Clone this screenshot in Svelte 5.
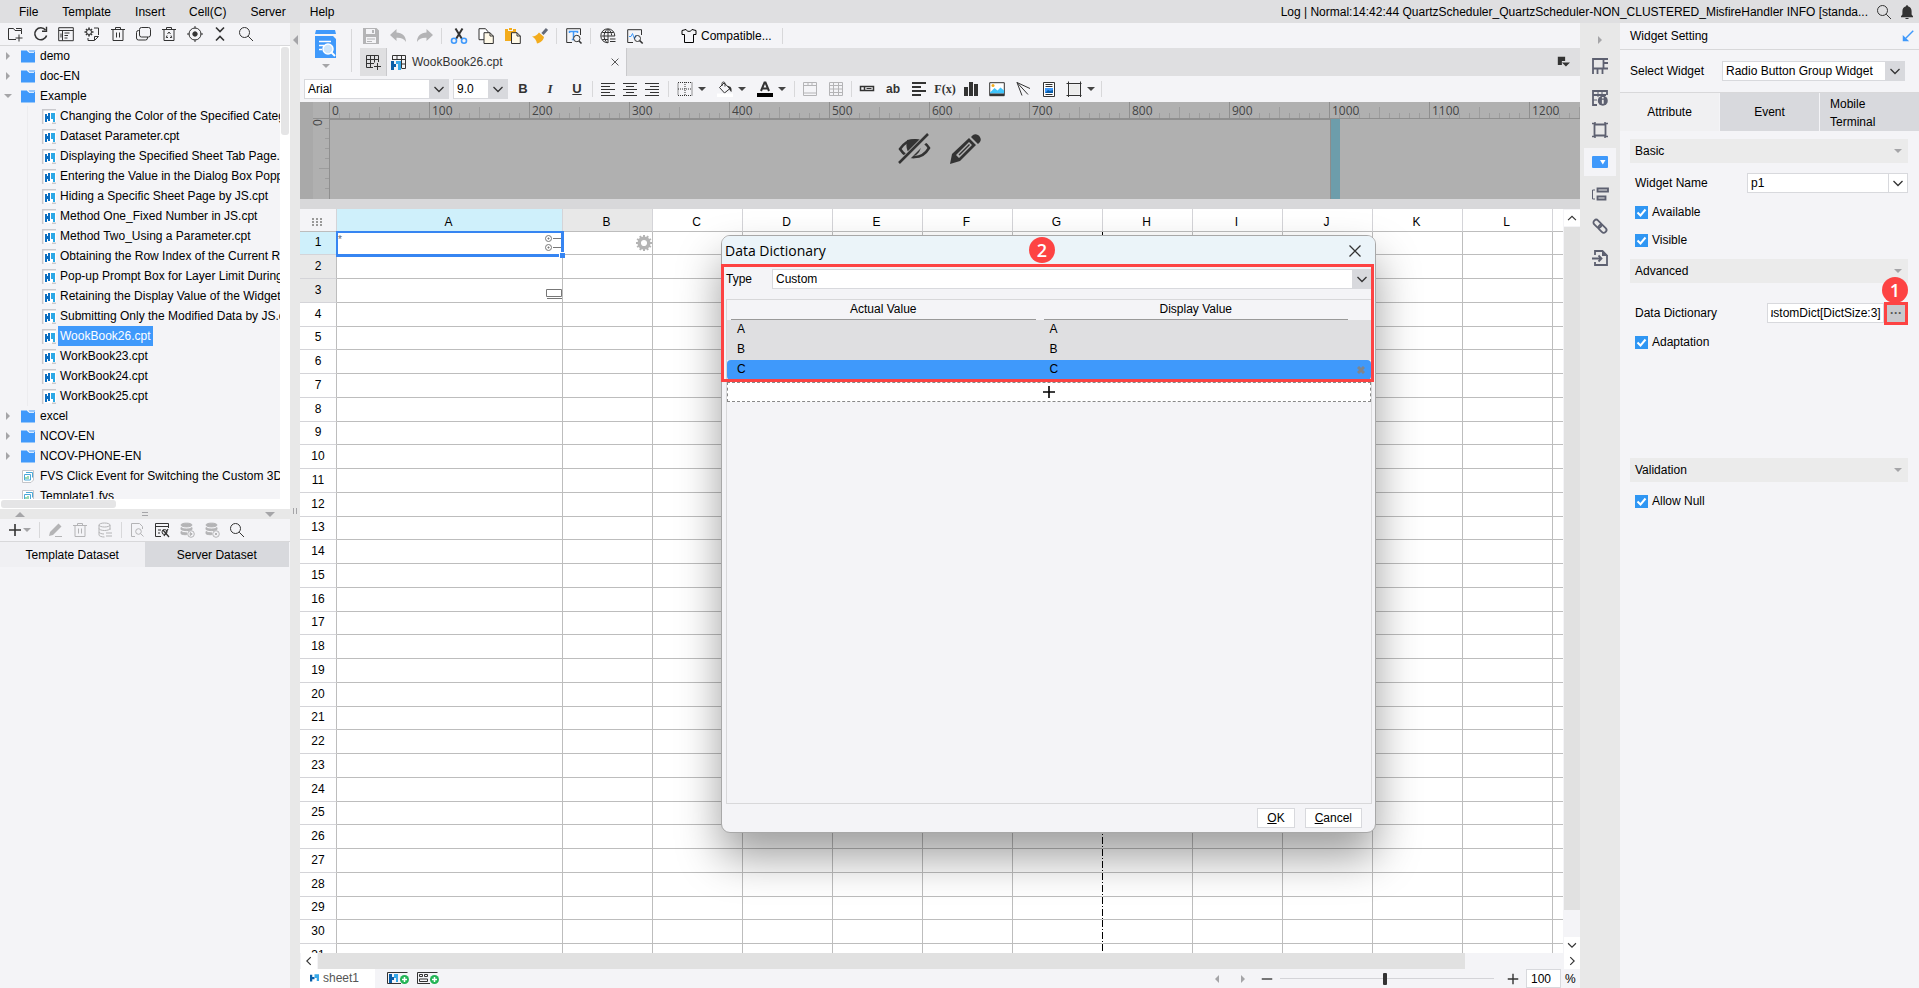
<script lang="ts">
	type Tool = { icon: string; label: string; off?: boolean };

	const menus = ['File', 'Template', 'Insert', 'Cell(C)', 'Server', 'Help'];

	// Inner markup of every 16x16 icon, stroked with the current color
	const icons: Record<string, string> = {
		search: '<circle cx="6.5" cy="6.5" r="5"/><path d="M10.2 10.2 15 15"/>',
		bell: '<path fill="currentColor" stroke="none" d="M8 1.2c.8 0 1 .5 1 1 2.4.6 3.6 2.5 3.6 5v3.3L14 12.3v.9H2v-.9l1.400-1.800V7.200c0-2.500 1.200-4.400 3.600-5 0-.5.2-1 1-1zM6.500 14h3v1h-3z"/>',
		newFolder: '<path d="M9 13.5H1.5v-11h5L8 4.5h6.5V8M9 2.5h5.5v2M12 8.5v7M8.5 12h7"/>',
		refresh: '<path stroke-width="1.6" d="M13.6 9.5A6 6 0 1 1 12.5 4"/><path stroke-width="1.4" d="M13.5.8v4.4H9"/>',
		window: '<path d="M.7 1.7h14.6v13H.7zM.7 4.5h14.6M4.5 4.5v10M6.500 7h5M6.500 9.500h3.500M6.500 12h3M3 7.500v4"/>',
		gearPage: '<circle cx="5" cy="6" r="2.5"/><path stroke-width="1.6" d="M5 1.5v2M5 8.5v2M.5 6h2M7.5 6h2M2 3l1.300 1.300M6.700 7.700 8 9M8 3 6.700 4.300M3.300 7.700 2 9"/><path d="M10 2h4.5v7M4 12v2.5h6M10.5 14.500v-4h4l-4 4z"/>',
		trash: '<path d="M1 3.5h14M5.5 3.5v-2h5v2M3 3.5v11h10v-11M6.500 6.500v5M9.500 6.500v5"/>',
		copy: '<rect x="4.5" y="1.5" width="11" height="9.5" rx="2"/><path d="M4.500 4.500h-1a2 2 0 0 0-2 2v5.500a2 2 0 0 0 2 2h7a2 2 0 0 0 2-2v-1"/>',
		recycle: '<path d="M1 3.5h14M5.5 3.5v-2h5v2M3 3.5v11h10v-11"/><path d="m6.5 8 1.5-2 1.5 2M10 9.500l.7 2H9M7 11.500H5.300l.7-2"/>',
		target: '<circle cx="8" cy="8" r="6"/><circle cx="8" cy="8" r="2.2" fill="currentColor"/><path d="M8 0v2.5M8 13.5V16M0 8h2.5M13.5 8H16"/>',
		collapse: '<path stroke-width="1.6" d="M4 1.5l4 4 4-4M4 14.5l4-4 4 4"/>',
		pencil: '<path fill="currentColor" stroke="none" d="M2 14l1-4 8.5-8.5 3 3L6 13z"/><path d="M8 14.500h7"/>',
		database: '<ellipse cx="7.5" cy="3" rx="5.5" ry="2"/><path d="M2 3v10c0 1 2.500 2 5.500 2M13 3v5M2 6.500c0 1 2.500 2 5.500 2s5.500-1 5.500-2M2 10c0 1 2.500 2 5 2M9 11h6M9 14h6"/>',
		docSearch: '<path d="M6 14.5H2.5v-13h8l3 3V7"/><circle cx="9.5" cy="9.5" r="2.8"/><path d="m11.5 11.5 3 3"/>',
		tableEdit: '<path d="M14.5 6V1.5h-13v13H7M1.500 4.500h13M4 8h3M4 11h2"/><circle cx="10.500" cy="10" r="2.500"/><path stroke-width="1.300" d="m9 8 6 7M14 7l-4 7"/>',
		databaseRun: '<path fill="currentColor" d="M2 3c0-2.500 11-2.500 11 0s-11 2.500-11 0zM2 5.500c2 2 9 2 11 0v2c-2 1.500-9 1.500-11 0zM2 9.500c1.500 1 4 1.500 5.500 1.200v2c-2 .1-4.500-.2-5.500-1z"/><circle cx="12" cy="12" r="3.300" fill="#f4f4f7"/><path fill="currentColor" d="m11.200 10.500 2 1.500-2 1.500z"/>',
		databaseStop: '<path fill="currentColor" d="M2 3c0-2.500 11-2.500 11 0s-11 2.500-11 0zM2 5.500c2 2 9 2 11 0v2c-2 1.500-9 1.500-11 0zM2 9.500c1.500 1 4 1.500 5.500 1.200v2c-2 .1-4.500-.2-5.500-1z"/><circle cx="12" cy="12" r="3.300" fill="#f4f4f7"/><path d="m10.800 10.800 2.400 2.400M13.200 10.800l-2.400 2.400"/>',
		save: '<path fill="currentColor" stroke="none" fill-rule="evenodd" d="M0 0h13.500L16 2.500V16H0zM3 1v5h9V1zm6 1h2v3H9zM3 9v6h10V9zm1 1.500h8v1H4zm0 2.500h5v1H4z"/>',
		undo: '<path fill="currentColor" stroke="none" d="M6.500 1v3.500C12 4.500 16 8 16 14c-2-3.500-5-4.500-9.500-4.300V13L0 7z"/>',
		redo: '<path fill="currentColor" stroke="none" d="M9.500 1v3.500C4 4.500 0 8 0 14c2-3.500 5-4.500 9.500-4.300V13L16 7z"/>',
		cut: '<path stroke-width="2" d="M4.500.5 11 11M11.500.5 5 11"/><g stroke="#3f99fb" stroke-width="1.600"><circle cx="3" cy="12.800" r="2.500"/><circle cx="13" cy="12.800" r="2.500"/></g>',
		copyPages: '<path fill="#fff" d="M1 .7h6.500l2.500 3v8H1z"/><path fill="#fff9e8" d="M6 4.700h6l3.300 3.300v7.500H6z"/><path d="M12 4.700V8h3.300"/>',
		paste: '<path fill="#f3ac1d" stroke="none" d="M0 1h3v2h5V1h3v4H6v8H0zM4 0h3v2H4z"/><path fill="#fff9e8" d="M6.500 4.700H12L15.300 8v7.500H6.500z"/><path d="M12 4.700V8h3.300"/>',
		brush: '<path stroke="#646a78" stroke-width="3" d="m15 1-4.500 5"/><path fill="#f3ac1d" stroke="none" d="M7 4.500 12 9c-1 4-4 6-7 6.500C4.500 12 2 9.500 0 8.500c3 0 5-1.500 7-4z"/>',
		textFind: '<path d="M6 14.500H.7V.7h13.800V7"/><path stroke="#3f99fb" stroke-width="1.500" d="M3.500 5V3.500h8V5M7.500 3.500v8M5.800 11.500h3.500"/><circle cx="10.800" cy="10.500" r="3.200" fill="#f5f5f7"/><path stroke-width="1.600" d="m13 13 2.500 2.500"/>',
		globe: '<path d="M8 14.800A7 7 0 1 1 14.800 8M8 1v14M1.300 8h13.500M2.300 4.500h11.400M2.300 11.500H8M7.500 1C3 5 3 11 7.500 15M8.500 1c2 2 3 4 3.200 6.500M10 11h5.500M10 13.500h5.500"/>',
		chartFind: '<path d="M6 14.500H.7V1.700h13.800V7"/><path stroke="#3f99fb" d="M2 8.500h2l1.500-3 2 5.500 1.500-4"/><circle cx="10.500" cy="10.500" r="3"/><path stroke-width="1.600" d="m12.700 12.700 3 2.800"/>',
		shirt: '<path d="M5 1.500 1 2.500v4h2.500v8h9v-8H15v-4l-4-1c-1 2.500-5 2.500-6 0z"/>',
		gridPlus: '<path d="M8 13.500H1.500v-12h12V8M1.500 5.500h12M1.500 9.500H9M5.500 1.500v12M9.500 1.500v7M12.500 9v7M9 12.500h7"/>',
		bookTab: '<path d="M1.500 6V1.500h13v13H11M1.500 5.500h13M6 1.500v4M10.500 1.500v13M10 10h4.500"/><path fill="#0a5ea8" stroke="none" d="M0 7h3v3h2v3H3v3H0z"/><path fill="#38a8e8" stroke="none" d="M5 7h5v9H7v-6H5z"/>',
		alignLeft: '<path d="M1 2.500h14M1 5.500h9M1 8.500h14M1 11.500h9M1 14.500h14"/>',
		alignCenter: '<path d="M1 2.500h14M4 5.500h8M1 8.500h14M4 11.500h8M1 14.500h14"/>',
		alignRight: '<path d="M1 2.500h14M6 5.500h9M1 8.500h14M6 11.500h9M1 14.500h14"/>',
		borders: '<path stroke-dasharray="1 1" d="M1 1.500h14v13H1zM8 1v14M1 8h14"/>',
		fill: '<path d="M7 2 2.500 6.500 7.500 12l5.500-4.500zM5 5V2.500C5 .5 8 .5 8 2.500v3"/><path fill="currentColor" stroke="none" d="M10 5c4 0 5 2 4.500 6-1.500-1-2-2.500-2.500-3.500z"/><path fill="#fff" stroke="none" d="M0 12.500h16V16H0z"/>',
		fontColor: '<path stroke-width="2" d="M4 10 7.500 1.500h1L12 10M5.500 7.500h5"/><path fill="#000" stroke="none" d="M0 12h16v4H0z"/>',
		mergeCells: '<path d="M1.500 1.500h13v13h-13zM1.500 4.500h13M6 1.500v3M10 1.500v3M1.500 12h13"/>',
		tableGrid: '<path d="M1.500 1.500h13v13h-13zM1.500 4.500h13M1.500 8h13M1.500 11.500h13M5.500 1.500v13M10.500 1.500v13"/>',
		widgetBar: '<path stroke-width="1.500" d="M1.500 5.500h13v4h-13zM5.500 5.500v4"/><path d="M7.500 7.500h5"/>',
		richText: '<path stroke-width="2" d="M1 2h14M1 6h9M1 10h14M1 14h9"/>',
		barChart: '<path fill="currentColor" stroke="none" d="M1 6h4v9H1zM6 1h4v14H6zM11 3h4v12h-4z"/>',
		image: '<path fill="#fff" d="M.7 1.700h14.600v13H.700z"/><circle cx="4" cy="4.500" r="1.500" fill="#f3ac1d" stroke="none"/><path fill="#3fc4fb" stroke="none" d="M1 11.500 5.500 7l3 2.500 3-3 3.500 3v3H1z"/><path fill="currentColor" stroke="none" d="M1 12.500h14V15H1z"/>',
		slope: '<path d="M2 1.500 7 14.500M2 1.500l11 12M2 1.500l13 6"/>',
		report: '<path fill="#fff" d="M2.500 1.500h11v14h-11z"/><path d="M4.500 3.500h7M4.500 5.500h7M4.500 13.500h7"/><path fill="#3f99fb" stroke="none" d="M4 7h8v5H4z"/><path fill="#0a5ea8" stroke="none" d="m4 12 3-3 2 1 3-1v3z"/>',
		frame: '<path d="M.5 2.500h15M.5 14.500h15M2.500.5v15.500M14.500.5v15.500"/><path fill="#ececec" stroke="none" d="M3.500 3.500h10v10h-10z"/>',
		cellElement: '<path stroke-width="1.800" d="M1 16V1h15M11.500 1v9M1 10.500h10.500M5.500 10v6M10.500 10v6M11.500 5H16M11.500 10.500H16"/>',
		cellInfo: '<path stroke-width="1.800" d="M5 15H1V1h14v4M1 5h13"/><path d="M6 1v6M10 1v5M1 10h4"/><circle cx="10.800" cy="10.800" r="5" fill="currentColor" stroke="none"/><path stroke="#e8e8e8" stroke-width="1.800" d="M10.800 7v1.500M10.800 9.800v4"/>',
		crop: '<path stroke-width="1.800" d="M2.500 2.500h11v11h-11z"/><path stroke-width="1.500" d="M0 1.500h3V0M16 1.500h-3V0M0 14.500h3V16M16 14.500h-3V16"/>',
		widget: '<rect x="0" y="2" width="16" height="12" rx="1" fill="#3f99fb" stroke="none"/><path fill="#fff" stroke="none" d="M8 6h5.500l-2.700 4.500z"/>',
		hierarchy: '<path stroke-width="1.800" d="M5.500 2.500H16v3H5.500zM5.500 10.500h8v3h-8z"/><path d="M3 4H.5v9H3"/>',
		link: '<g stroke-width="1.800"><rect x="1" y="3" width="9" height="5.500" rx="2.700" transform="rotate(45 5.500 5.700)"/><rect x="6" y="8" width="9" height="5.500" rx="2.700" transform="rotate(45 10.500 10.700)"/></g>',
		exportPage: '<path stroke-width="1.800" d="M3 5V1h7.500L15 5.500V15H3v-3M0 8.500h9M6.500 5.500l3 3-3 3"/><path fill="currentColor" stroke="none" d="M10 0l6 6h-6z"/>',
		down: '<path stroke-width="1.300" d="m3.500 6 4.500 4.500L12.500 6"/>',
		up: '<path stroke-width="1.300" d="M3.500 10.500 8 6l4.500 4.500"/>',
		left: '<path stroke-width="1.300" d="M10 3.500 5.500 8l4.500 4.500"/>',
		right: '<path stroke-width="1.300" d="M6 3.500 10.500 8 6 12.500"/>',
		close: '<path stroke-width="1.300" d="m2.500 2.500 11 11M13.500 2.500l-11 11"/>',
		plus: '<path stroke-width="1.600" d="M8 2v12M2 8h12"/>',
		minus: '<path stroke-width="1.500" d="M2 8h12"/>',
		undock: '<path stroke="#3f99fb" stroke-width="2" d="M15 1 5 11"/><path fill="#3f99fb" stroke="none" d="M1 6.500V15h8.500z"/>',
		tabMenu: '<path fill="currentColor" stroke="none" d="M1 1h9v5H6v5H1zM6 8h10l-5 5z"/>',
		folder: '<path fill="#3f99fb" stroke="none" d="M1 2.500h6L8.500 4H15v10.500H1z"/><path fill="#3f99fb" stroke="none" d="M8.500 2.500H15v1H9.500z"/><path stroke="#fff" stroke-width=".8" d="M7.500 2.500 9 4.500h5"/>',
		cpt: '<path fill="#fff" stroke="none" d="M2 2h13v13H2z"/><path stroke="#c9c9cd" stroke-width="1.500" d="M15 1.700H1.700V16"/><path fill="#c9c9cd" stroke="none" d="M11 14.500h4V16h-4z"/><path fill="#0a6dc0" stroke="none" d="M4 6h2v2h1V5h2v8H7v-2H6v3H4z"/><path fill="#2aa8e6" stroke="none" d="M10 5h4v9h-2v-3h-2z"/>',
		fvs: '<path fill="#fff" stroke="#c4c4c8" d="M2.500 2.500h11V12L11 14.500H2.500z"/><path stroke="#4aa8d8" d="M6 4.500h6.500v5M4.500 6.500h6V12h-6z"/><path stroke="#35b36a" d="M6 11V9M8 11V8"/>',
		sheet: '<path fill="#0a5ea8" stroke="none" d="M0 3h4v4h4v4H4v4H0z"/><path fill="#38a8e8" stroke="none" d="M8 2h8v12h-4V9H8z"/>'
	};

	const treeTools: Tool[] = [
		{ icon: 'newFolder', label: 'New folder' },
		{ icon: 'refresh', label: 'Refresh' },
		{ icon: 'window', label: 'Show in explorer' },
		{ icon: 'gearPage', label: 'Template settings' },
		{ icon: 'trash', label: 'Delete' },
		{ icon: 'copy', label: 'Duplicate' },
		{ icon: 'recycle', label: 'Recycle bin' },
		{ icon: 'target', label: 'Locate' },
		{ icon: 'collapse', label: 'Collapse all' },
		{ icon: 'search', label: 'Search files' }
	];

	const exampleFiles = [
		'Changing the Color of the Specified Category.cpt',
		'Dataset Parameter.cpt',
		'Displaying the Specified Sheet Tab Page.cpt',
		'Entering the Value in the Dialog Box Popped up.cpt',
		'Hiding a Specific Sheet Page by JS.cpt',
		'Method One_Fixed Number in JS.cpt',
		'Method Two_Using a Parameter.cpt',
		'Obtaining the Row Index of the Current Row.cpt',
		'Pop-up Prompt Box for Layer Limit During.cpt',
		'Retaining the Display Value of the Widget.cpt',
		'Submitting Only the Modified Data by JS.cpt',
		'WookBook26.cpt',
		'WorkBook23.cpt',
		'WorkBook24.cpt',
		'WorkBook25.cpt'
	];

	const tree = [
		{ name: 'demo', icon: 'folder' },
		{ name: 'doc-EN', icon: 'folder' },
		{ name: 'Example', icon: 'folder', files: exampleFiles },
		{ name: 'excel', icon: 'folder' },
		{ name: 'NCOV-EN', icon: 'folder' },
		{ name: 'NCOV-PHONE-EN', icon: 'folder' },
		{ name: 'FVS Click Event for Switching the Custom 3D', icon: 'fvs' },
		{ name: 'Template1.fvs', icon: 'fvs' }
	];

	const dataTools: Tool[][] = [
		[
			{ icon: 'pencil', label: 'Edit dataset', off: true },
			{ icon: 'trash', label: 'Delete dataset', off: true },
			{ icon: 'database', label: 'Dataset storage', off: true }
		],
		[
			{ icon: 'docSearch', label: 'Preview dataset', off: true },
			{ icon: 'tableEdit', label: 'Edit connection' },
			{ icon: 'databaseRun', label: 'Run procedure', off: true },
			{ icon: 'databaseStop', label: 'Stop procedure', off: true },
			{ icon: 'search', label: 'Search datasets' }
		]
	];

	const mainTools: Tool[][] = [
		[
			{ icon: 'save', label: 'Save', off: true },
			{ icon: 'undo', label: 'Undo', off: true },
			{ icon: 'redo', label: 'Redo', off: true }
		],
		[
			{ icon: 'cut', label: 'Cut' },
			{ icon: 'copyPages', label: 'Copy' },
			{ icon: 'paste', label: 'Paste' },
			{ icon: 'brush', label: 'Format painter' }
		],
		[{ icon: 'textFind', label: 'Find text' }],
		[
			{ icon: 'globe', label: 'Web attributes' },
			{ icon: 'chartFind', label: 'Performance' }
		]
	];

	const aligns = ['alignLeft', 'alignCenter', 'alignRight'];
	const paints = ['borders', 'fill', 'fontColor'];
	const sideTabs = ['cellElement', 'cellInfo', 'crop', 'widget', 'hierarchy', 'link', 'exportPage'];

	const columns = ['A', 'B', 'C', 'D', 'E', 'F', 'G', 'H', 'I', 'J', 'K', 'L'];
	const rows = Array.from({ length: 31 }, (_, i) => i + 1);
	const marks = Array.from({ length: 13 }, (_, i) => i * 100);
	const ticks = Array.from({ length: 126 }, (_, i) => i * 10).filter((t) => t % 100);
	const teeth = Array.from({ length: 12 }, (_, i) => i * 30);

	let font = 'Arial';
	let fontSize = '9.0';
	let widgetType = 'Radio Button Group Widget';
	let widgetName = 'p1';
	let dictionary = 'CustomDict[DictSize:3]';
	let available = true;
	let visible = true;
	let adaptation = true;
	let allowNull = true;
	let dictType = 'Custom';
	let zoom = 49;
	let zoomText = '100';

	const dictRows = ['A', 'B', 'C'];
	let selected = 'C';

	// keep the end of a long value in sight
	function scrollToEnd(node: HTMLInputElement) {
		node.scrollLeft = node.scrollWidth;
	}
</script>

{#snippet icon(name: string, size = 16)}
	<svg class="icon" width={size} height={size} viewBox="0 0 16 16" aria-hidden="true">{@html icons[name]}</svg>
{/snippet}

{#snippet toolButton(tool: Tool)}
	<button class="tool" class:off={tool.off} aria-label={tool.label}>{@render icon(tool.icon)}</button>
{/snippet}

{#snippet check()}
	<svg class="tick" width="13" height="13" viewBox="0 0 13 13" aria-hidden="true"><path d="m2.5 6.5 3 3 5-6" /></svg>
{/snippet}

<div class="app">
	<header class="menubar">
		<nav>
			{#each menus as menu}
				<button>{menu}</button>
			{/each}
		</nav>
		<div class="log">
			<span>Log | Normal:14:42:44 QuartzScheduler_QuartzScheduler-NON_CLUSTERED_MisfireHandler INFO [standa...</span>
			<button class="tool" aria-label="Search">{@render icon('search')}</button>
			<button class="tool" aria-label="Notifications">{@render icon('bell')}</button>
		</div>
	</header>

	<div class="body">
		<aside class="left">
			<div class="tree-tools">
				{#each treeTools as tool}
					{@render toolButton(tool)}
				{/each}
			</div>
			<div class="tree-box">
				<ul class="tree">
					{#each tree as node}
						<li>
							<div class="node">
								<span class="caret" class:open={node.files} class:none={node.icon === 'fvs'}></span>
								{@render icon(node.icon)}
								<span>{node.name}</span>
							</div>
							{#if node.files}
								<ul class="files">
									{#each node.files as file}
										<li class="node">
											{@render icon('cpt')}
											<span class="file" class:current={file === 'WookBook26.cpt'}>{file}</span>
										</li>
									{/each}
								</ul>
							{/if}
						</li>
					{/each}
				</ul>
				<div class="track-y"><div class="thumb"></div></div>
			</div>
			<div class="track-x"><div class="thumb"></div></div>
			<div class="divider">
				<span class="arrow up"></span>
				<span class="grip"></span>
				<span class="arrow down"></span>
			</div>
			<div class="data-tools">
				<button class="tool add" aria-label="Add dataset">{@render icon('plus')}<span class="arrow down"></span></button>
				{#each dataTools as group}
					<span class="sep"></span>
					{#each group as tool}
						{@render toolButton(tool)}
					{/each}
				{/each}
			</div>
			<div class="data-tabs">
				<button class="active">Template Dataset</button>
				<button>Server Dataset</button>
			</div>
		</aside>

		<div class="splitter">
			<span class="fold"></span>
			<span class="grip"></span>
		</div>

		<main>
			<div class="top">
				<button class="preview" aria-label="Preview">
					<svg width="21" height="28" viewBox="0 0 21 28" aria-hidden="true">
						<path fill="#3f99fb" d="M1 0h19l1 4H0zM0 6h18l3 3v19H0z" />
						<path stroke="#fff" stroke-width="1.5" d="M4 11.5h12M4 15.5h5M4 19.5h3" />
						<circle cx="13" cy="19" r="5" fill="#cde5fb" stroke="#fff" stroke-width="1.5" />
						<path stroke="#fff" stroke-width="2" d="m16 22 4 4" />
					</svg>
					<span class="arrow down"></span>
				</button>
				<div class="top-rows">
					<div class="main-tools">
						{#each mainTools as group, i}
							{#if i}<span class="sep"></span>{/if}
							{#each group as tool}
								{@render toolButton(tool)}
							{/each}
						{/each}
						<button class="theme">{@render icon('shirt')}Compatible...</button>
						<span class="sep"></span>
					</div>
					<div class="tabs">
						<button class="tab-new" aria-label="New workbook">{@render icon('gridPlus')}</button>
						<div class="tab">
							{@render icon('bookTab')}
							<span>WookBook26.cpt</span>
							<button class="tool" aria-label="Close tab">{@render icon('close', 10)}</button>
						</div>
						<button class="tool tab-menu" aria-label="All tabs">{@render icon('tabMenu', 13)}</button>
					</div>
				</div>
			</div>

			<div class="format">
				<div class="combo font">
					<select aria-label="Font" bind:value={font}><option>Arial</option></select>
					<span class="chevron">{@render icon('down')}</span>
				</div>
				<div class="combo size">
					<select aria-label="Font size" bind:value={fontSize}><option>9.0</option></select>
					<span class="chevron">{@render icon('down')}</span>
				</div>
				<div class="group text-style">
					<button class="tool"><b>B</b></button>
					<button class="tool"><i>I</i></button>
					<button class="tool"><u>U</u></button>
				</div>
				<span class="sep"></span>
				<div class="group align">
					{#each aligns as name}
						<button class="tool" aria-label={name}>{@render icon(name)}</button>
					{/each}
				</div>
				<span class="sep"></span>
				<div class="group paint">
					{#each paints as name}
						<button class="tool drop" aria-label={name}>{@render icon(name)}<span class="arrow down"></span></button>
					{/each}
				</div>
				<span class="sep"></span>
				<div class="group">
					<button class="tool off" aria-label="Merge cells">{@render icon('mergeCells')}</button>
					<button class="tool off" aria-label="Unmerge cells">{@render icon('tableGrid')}</button>
				</div>
				<span class="sep"></span>
				<div class="group">
					<button class="tool" aria-label="Widget">{@render icon('widgetBar')}</button>
					<button class="tool ab">ab</button>
					<button class="tool" aria-label="Rich text">{@render icon('richText')}</button>
					<button class="tool fx">F(x)</button>
					<button class="tool" aria-label="Chart">{@render icon('barChart')}</button>
					<button class="tool" aria-label="Image">{@render icon('image')}</button>
					<button class="tool" aria-label="Slope line">{@render icon('slope')}</button>
					<button class="tool" aria-label="Sub report">{@render icon('report')}</button>
					<button class="tool drop" aria-label="Float element">{@render icon('frame')}<span class="arrow down"></span></button>
				</div>
				<span class="sep"></span>
			</div>

			<!-- parameter pane: rulers, body and its edit handles -->
			<svg class="pane" height="97" aria-label="Parameter pane">
				<rect width="13" height="97" fill="#a9a9a9" />
				<path class="edge" d="M29.500 0v97M13 16.500h1280" />
				<path class="edge" stroke="#8c8c8c" d="M30 17.500h1010" />
				{#each marks as mark}
					<path class="edge" d="M{mark + 29.5} 0v16" />
					<text x={mark + 32} y="13">{mark}</text>
				{/each}
				{#each ticks as t}
					<path class="edge faint" d="M{t + 29.5} {t % 50 ? 11 : 5}V16" />
				{/each}
				{#each [10, 20, 30, 40, 50, 60, 70] as t}
					<path class="edge faint" d="M{t % 50 ? 25 : 19} {t + 16.5}H29" />
				{/each}
				<text class="turned" x="-24" y="22">0</text>
				<rect x="1030" y="17" width="1" height="80" fill="#8c8c8c" />
				<rect x="1031" y="17" width="9" height="80" fill="#6d9dab" />
				<g transform="translate(598 31)" fill="none" stroke="#333" stroke-width="2.5">
					<path d="M2 16c7-11 22-12 29-1-7 12-22 12-29 1z" />
					<path fill="#333" stroke="none" d="M9 7c4-1 12-1 15 1-1 9-3 13-8 15-6-1-9-8-7-16z" />
					<path stroke="#b0b0b0" stroke-width="7" d="M2 31 31 2" />
					<path d="M1 30 30 1" />
				</g>
				<g transform="translate(650 32)" fill="#333">
					<path fill-rule="evenodd" d="M0 30 2 20 19 4l7 7L10 27zM6 21l3 3L22 11l-3-3z" />
					<path d="m21 3 2-2c4-3 10 3 7 7l-2 2zM8.500 20.500 19 10l1 1L9.500 21.500z" />
				</g>
			</svg>

			<div class="gap"></div>

			<div class="sheet-area">
				<div class="sheet">
					<table>
						<colgroup>
							<col class="c-num" />
							<col class="c-a" />
							{#each columns as _}
								<col class="c-std" />
							{/each}
						</colgroup>
						<thead>
							<tr>
								<th class="corner" aria-label="Select all">
									<svg width="11" height="8" viewBox="0 0 11 8" aria-hidden="true"><path stroke="#999" stroke-width="2" stroke-dasharray="2 2" d="M0 1h11M0 4h11M0 7h11" /></svg>
								</th>
								{#each columns as column}
									<th class:selected={column === 'A'} class:touched={column === 'B'}>{column}</th>
								{/each}
								<th></th>
							</tr>
						</thead>
						<tbody>
							{#each rows as row}
								<tr class:short={row % 4 === 1}>
									<th class:selected={row === 1} class:touched={row === 2 || row === 3}>{row}</th>
									{#each columns as column}
										<td class:page={column === 'G'}>
											{#if row === 1 && column === 'A'}
												<div class="cell-selection">
													<span>*</span>
													<svg width="16" height="16" viewBox="0 0 16 16" fill="none" stroke="#777" aria-hidden="true">
														<circle cx="3.500" cy="3.500" r="3" /><circle cx="3.500" cy="12.500" r="3" />
														<path d="M8 3.500h8M8 12.500h8" />
														<path fill="#777" d="M3 3h1v1H3zM3 12h1v1H3z" />
													</svg>
												</div>
											{:else if row === 1 && column === 'B'}
												<svg class="gear" width="16" height="16" viewBox="-8 -8 16 16" aria-hidden="true">
													<circle r="4.800" fill="none" stroke="#b4b4b4" stroke-width="3.500" />
													{#each teeth as angle}
														<path fill="#b4b4b4" transform="rotate({angle})" d="M-1-8h2v3h-2z" />
													{/each}
												</svg>
											{:else if row === 3 && column === 'A'}
												<svg class="button-widget" width="16" height="10" viewBox="0 0 16 10" fill="none" stroke="#777" aria-hidden="true"><path d="M.5.5h15v7H.5zM1 9.500h15" /></svg>
											{/if}
										</td>
									{/each}
									<td></td>
								</tr>
							{/each}
						</tbody>
					</table>
				</div>
				<div class="scroll-y">
					<button aria-label="Scroll up">{@render icon('up', 14)}</button>
					<span class="bar"></span>
					<span class="rest"></span>
					<button aria-label="Scroll down">{@render icon('down', 14)}</button>
				</div>
			</div>
			<div class="scroll-x">
				<button aria-label="Scroll left">{@render icon('left', 14)}</button>
				<span class="bar"></span>
				<span class="rest"></span>
				<button aria-label="Scroll right">{@render icon('right', 14)}</button>
			</div>
			<footer>
				<button class="sheet-tab">{@render icon('sheet', 9)}sheet1</button>
				<button class="tool new-sheet" aria-label="New report sheet">
					<svg width="22" height="13" viewBox="0 0 22 13" aria-hidden="true">
						<path fill="none" stroke="#333" d="M14 11.500H.5V.5h20" />
						<path fill="#0a5ea8" d="M2 2h3v3h2v3H5v3H2z" /><path fill="#38a8e8" d="M7 2h4v8H9V6H7z" />
						<circle cx="17.500" cy="7.500" r="4.500" fill="#22b455" /><path stroke="#fff" stroke-width="1.500" d="M17.500 5v5M15 7.500h5" />
					</svg>
				</button>
				<button class="tool new-sheet" aria-label="New widget sheet">
					<svg width="22" height="13" viewBox="0 0 22 13" aria-hidden="true">
						<path fill="none" stroke="#333" d="M13 11.500H.5V.5h20M2.500 2.500h3v2h-3zM7.500 2.500h3v2h-3zM2.500 7h8v2.500h-8z" />
						<circle cx="17.500" cy="7.500" r="4.500" fill="#22b455" /><path stroke="#fff" stroke-width="1.500" d="M17.500 5v5M15 7.500h5" />
					</svg>
				</button>
				<div class="zoom">
					<span class="arrow prev"></span>
					<span class="arrow next"></span>
					<button class="tool" aria-label="Zoom out">{@render icon('minus', 14)}</button>
					<input type="range" aria-label="Zoom" min="0" max="100" bind:value={zoom} />
					<button class="tool" aria-label="Zoom in">{@render icon('plus', 14)}</button>
					<input class="percent" aria-label="Zoom percent" bind:value={zoomText} />
					<span>%</span>
				</div>
			</footer>
		</main>

		<div class="strip">
			<span class="arrow next"></span>
			{#each sideTabs as name}
				<button class:active={name === 'widget'} aria-label={name}>{@render icon(name)}</button>
			{/each}
		</div>

		<aside class="right">
			<div class="title">
				<span>Widget Setting</span>
				<button class="tool" aria-label="Undock">{@render icon('undock', 12)}</button>
			</div>
			<div class="select-row">
				<label for="widget-type">Select Widget</label>
				<div class="combo">
					<select id="widget-type" bind:value={widgetType}><option>Radio Button Group Widget</option></select>
					<span class="chevron">{@render icon('down')}</span>
				</div>
			</div>
			<div class="panel-tabs">
				<button class="active">Attribute</button>
				<button>Event</button>
				<button class="long">Mobile Terminal</button>
			</div>
			<div class="attributes">
				<h3>Basic<span class="arrow down"></span></h3>
				<div class="field first">
					<label for="widget-name">Widget Name</label>
					<div class="combo plain">
						<select id="widget-name" bind:value={widgetName}><option>p1</option></select>
						<span class="chevron">{@render icon('down')}</span>
					</div>
				</div>
				<label class="check"><input type="checkbox" bind:checked={available} />{@render check()}Available</label>
				<label class="check"><input type="checkbox" bind:checked={visible} />{@render check()}Visible</label>
				<h3>Advanced<span class="arrow down"></span></h3>
				<div class="field dict">
					<label for="dictionary">Data Dictionary</label>
					<input id="dictionary" bind:value={dictionary} use:scrollToEnd />
					<div class="marked">
						<button aria-label="Edit data dictionary">···</button>
						<span class="badge">1</span>
					</div>
				</div>
				<label class="check last"><input type="checkbox" bind:checked={adaptation} />{@render check()}Adaptation</label>
				<h3>Validation<span class="arrow down"></span></h3>
				<label class="check null"><input type="checkbox" bind:checked={allowNull} />{@render check()}Allow Null</label>
			</div>
		</aside>
	</div>

	<div class="dialog" role="dialog" aria-labelledby="dialog-title">
		<div class="dialog-title">
			<h2 id="dialog-title">Data Dictionary</h2>
			<button class="tool" aria-label="Close">{@render icon('close')}</button>
		</div>
		<div class="type-row">
			<label for="dict-type">Type</label>
			<div class="combo">
				<select id="dict-type" bind:value={dictType}><option>Custom</option></select>
				<span class="chevron">{@render icon('down')}</span>
			</div>
		</div>
		<div class="dict-box">
			<table>
				<thead>
					<tr><th><span>Actual Value</span></th><th><span>Display Value</span></th><th class="end"></th></tr>
				</thead>
				<tbody>
					{#each dictRows as value}
						<tr class:selected={value === selected} on:click={() => (selected = value)}>
							<td>{value}</td>
							<td>{value}</td>
							<td class="end">
								{#if value === selected}
									<button class="tool" aria-label="Remove row">
										<svg width="8" height="8" viewBox="0 0 8 8" aria-hidden="true"><path stroke="#80858c" stroke-width="3" d="m1 1 6 6M7 1 1 7" /></svg>
									</button>
								{/if}
							</td>
						</tr>
					{/each}
				</tbody>
			</table>
			<button class="add-row" aria-label="Add row">{@render icon('plus')}</button>
		</div>
		<div class="dialog-buttons">
			<button><u>O</u>K</button>
			<button><u>C</u>ancel</button>
		</div>
		<div class="outline"></div>
		<span class="badge">2</span>
	</div>
</div>

<style>
	:global(body) {
		margin: 0;
		overflow: hidden;
	}

	.app {
		position: relative;
		display: flex;
		flex-direction: column;
		height: 100vh;
		overflow: hidden;
		background: #f4f4f7;
		color: #000;
		font: 12px/16px 'Liberation Sans', Arial, sans-serif;
	}

	.app * {
		box-sizing: border-box;
	}

	button,
	select,
	input {
		margin: 0;
		padding: 0;
		border: 0;
		border-radius: 0;
		background: none;
		color: inherit;
		font: inherit;
	}

	ul {
		margin: 0;
		padding: 0;
		list-style: none;
	}

	.icon {
		flex: none;
		display: block;
		fill: none;
		stroke: currentColor;
		overflow: visible;
	}

	.tool {
		flex: none;
		display: flex;
		align-items: center;
		justify-content: center;
		color: #333;
	}

	.off {
		color: #b4b4b6;
	}

	.sep {
		flex: none;
		width: 1px;
		height: 16px;
		background: #d8d8da;
	}

	.arrow {
		flex: none;
		width: 0;
		height: 0;
		border: 4px solid transparent;
		color: #a5a5a8;
	}

	.arrow.down {
		border-top-color: currentColor;
		border-bottom: 0;
	}

	.arrow.up {
		border-bottom-color: currentColor;
		border-top: 0;
	}

	.arrow.next {
		border-left-color: currentColor;
		border-right: 0;
	}

	.arrow.prev {
		border-right-color: currentColor;
		border-left: 0;
	}

	.menubar {
		flex: none;
		display: flex;
		justify-content: space-between;
		height: 23px;
		background: #dfdfe1;
	}

	nav {
		display: flex;
		align-items: center;
		gap: 24px;
		padding-left: 19px;
	}

	.log {
		display: flex;
		align-items: center;
		gap: 7px;
		padding-right: 4px;
		white-space: nowrap;
	}

	.log span {
		margin-right: 1px;
	}

	.body {
		flex: 1;
		display: flex;
		min-height: 0;
	}

	/* left column */
	.left {
		flex: none;
		display: flex;
		flex-direction: column;
		width: 290px;
	}

	.tree-tools {
		flex: none;
		display: flex;
		justify-content: space-between;
		height: 23px;
		padding: 0 36px 0 7px;
		border-bottom: 1px solid #d8d8da;
	}

	.tree-box {
		flex: none;
		display: flex;
		height: 453px;
	}

	.tree {
		flex: 1;
		min-width: 0;
		overflow: hidden;
		white-space: nowrap;
	}

	.node {
		display: flex;
		align-items: center;
		height: 20px;
	}

	.node .icon {
		margin-right: 4px;
	}

	.caret {
		flex: none;
		width: 4px;
		height: 8px;
		margin: 0 10px 0 6px;
		border: 4px solid transparent;
		border-left-color: #a5a5a8;
		border-right: 0;
	}

	.caret.open {
		width: 8px;
		height: 4px;
		margin: 0 8px 0 4px;
		border: 4px solid transparent;
		border-top-color: #a5a5a8;
		border-bottom: 0;
	}

	.caret.none {
		border-color: transparent;
	}

	.files {
		margin-left: 27px;
		border-left: 1px solid #ececef;
	}

	.files .node {
		padding-left: 13px;
	}

	.file {
		padding: 2px;
	}

	.files .icon {
		margin-right: 1px;
	}

	.current {
		background: #3f99fb;
		color: #fff;
	}

	.track-y {
		flex: none;
		width: 10px;
		padding: 1px;
		background: #fff;
	}

	.track-y .thumb {
		height: 88px;
		border-radius: 3px;
		background: #e5e5e6;
	}

	.track-x {
		flex: none;
		height: 10px;
		padding: 1px;
		background: #fff;
	}

	.track-x .thumb {
		width: 40%;
		height: 8px;
		border-radius: 3px;
		background: #e5e5e6;
	}

	.divider {
		flex: none;
		display: flex;
		align-items: center;
		justify-content: space-between;
		height: 10px;
		padding: 0 15px;
		background: #e8e8e8;
	}

	.divider .arrow {
		border-width: 5px;
	}

	.divider .up {
		border-top: 0;
	}

	.divider .down {
		border-bottom: 0;
	}

	.divider .grip {
		width: 6px;
		height: 4px;
		border: solid #a5a5a8;
		border-width: 1px 0;
	}

	.data-tools {
		flex: none;
		display: flex;
		align-items: center;
		gap: 9px;
		height: 23px;
		padding-left: 7px;
		border-bottom: 1px solid #d8d8da;
	}

	.data-tools .sep {
		margin: 0 -2px 0 -1px;
	}

	.add {
		gap: 0;
	}

	.data-tabs {
		display: flex;
		height: 25px;
		padding-right: 1px;
	}

	.data-tabs button {
		flex: 1;
		background: #d8d9dd;
	}

	.data-tabs .active {
		background: #f0f0f3;
	}

	.splitter {
		flex: none;
		display: flex;
		flex-direction: column;
		align-items: center;
		gap: 463px;
		width: 10px;
		padding-top: 12px;
		background: #e8e8e8;
	}

	.fold {
		border: 5px solid transparent;
		border-right-color: #a5a5a8;
		border-left: 0;
	}

	.splitter .grip {
		width: 4px;
		height: 6px;
		border: solid #a5a5a8;
		border-width: 0 1px;
	}

	/* main column */
	main {
		flex: 1;
		display: flex;
		flex-direction: column;
		min-width: 0;
	}

	.top {
		flex: none;
		display: flex;
		height: 53px;
	}

	.preview {
		flex: none;
		display: flex;
		flex-direction: column;
		align-items: center;
		gap: 6px;
		width: 52px;
		height: 43px;
		margin: 6px 8px 0 0;
		border-right: 1px solid #d8d8da;
	}

	.preview svg {
		margin-top: 1px;
	}

	.top-rows {
		flex: 1;
		min-width: 0;
	}

	.main-tools {
		display: flex;
		align-items: center;
		gap: 11px;
		height: 25px;
		padding-left: 3px;
	}

	.main-tools .sep {
		margin: 0 -2px 0 -3px;
	}

	.theme {
		display: flex;
		align-items: center;
		gap: 4px;
		margin: 0 2px 0 27px;
	}

	.tabs {
		display: flex;
		height: 28px;
		background: #dfdfe1;
	}

	.tab-new {
		width: 27px;
		padding-left: 5px;
		border-right: 1px solid #c9c9cc;
		color: #333;
	}

	.tab {
		display: flex;
		align-items: center;
		gap: 5px;
		width: 240px;
		padding: 0 6px 0 4px;
		border-right: 1px solid #c9c9cc;
		background: #f4f4f7;
		color: #333;
	}

	.tab span {
		flex: 1;
	}

	.tab-menu {
		margin: 0 10px 0 auto;
	}

	.combo {
		display: grid;
		height: 20px;
		border: 1px solid #d8d9dd;
		background: #fff;
	}

	.combo select {
		grid-area: 1 / 1;
		width: 100%;
		padding-left: 3px;
		appearance: none;
	}

	.chevron {
		grid-area: 1 / 1;
		justify-self: end;
		display: grid;
		place-items: center;
		width: 19px;
		background: #d8d9dd;
		color: #333;
		pointer-events: none;
	}

	.plain .chevron {
		border-left: 1px solid #d8d9dd;
		background: #fff;
	}

	.format {
		flex: none;
		display: flex;
		align-items: center;
		gap: 6px;
		height: 26px;
		padding-left: 4px;
	}

	.format .font {
		width: 145px;
		margin-right: -2px;
	}

	.size {
		width: 55px;
	}

	.group {
		display: flex;
		gap: 8px;
	}

	.group .tool {
		min-width: 18px;
		height: 18px;
	}

	.text-style {
		gap: 9px;
		font-size: 13px;
	}

	.text-style i {
		font-family: 'Liberation Serif', serif;
		font-weight: bold;
	}

	.text-style u {
		font-weight: bold;
	}

	.align {
		gap: 4px;
		padding-right: 1px;
	}

	.paint {
		gap: 11px;
		padding: 0 2px;
	}

	.drop {
		gap: 5px;
	}

	.drop .arrow {
		color: #444;
	}

	.ab {
		font-weight: bold;
	}

	.group .fx {
		width: 18px;
		font: bold 12px/18px 'Liberation Serif', serif;
	}

	.pane {
		flex: none;
		display: block;
		width: 100%;
		background: #b0b0b0;
	}

	.edge {
		fill: none;
		stroke: #8f8f8f;
	}

	.faint {
		stroke: #9c9c9c;
	}

	.pane text {
		fill: #444;
		font: 12px 'Open Sans', sans-serif;
	}

	.turned {
		transform: rotate(-90deg);
	}

	.gap {
		flex: none;
		height: 10px;
		background: #d8d8da;
	}

	.sheet-area {
		flex: 1;
		display: flex;
		min-height: 0;
	}

	.sheet {
		flex: 1;
		min-width: 0;
		overflow: hidden;
		background: #fff;
	}

	.sheet table {
		width: 1343px;
		border-spacing: 0;
		table-layout: fixed;
	}

	.c-num {
		width: 37px;
	}

	.c-a {
		width: 226px;
	}

	.c-std {
		width: 90px;
	}

	.sheet th,
	.sheet td {
		height: 24px;
		padding: 0;
		border: solid #bdbdbd;
		border-width: 0 1px 1px 0;
		font-weight: normal;
		line-height: 16px;
	}

	.sheet thead th,
	.sheet .short th,
	.sheet .short td {
		height: 23px;
	}

	.sheet thead th {
		padding: 3px 2px 0 0;
		border-right-color: #d4d4d8;
	}

	.sheet tbody th {
		padding-bottom: 2px;
		border-bottom-color: #d4d4d8;
	}

	.sheet th.selected {
		background: #cff0fb;
	}

	.sheet th.touched {
		background: #e8e8e8;
	}

	.sheet th.corner {
		background: #f4f4f7;
		vertical-align: middle;
	}

	.sheet td svg {
		display: block;
		margin-left: auto;
	}

	/* right edge of the printed page */
	.sheet td.page {
		border-right-color: transparent;
		background: repeating-linear-gradient(#000 0 7px, transparent 7px 9px, #000 9px 10px, transparent 10px 12px) right / 1px 100% no-repeat border-box;
	}

	.cell-selection {
		position: relative;
		display: flex;
		justify-content: space-between;
		height: 26px;
		margin: -2px -2px -3px -1px;
		padding: 2px 0 0;
		border: 2px solid #3685f2;
		border-right-width: 3px;
		border-bottom-width: 3px;
		color: #666;
		font-size: 10px;
		line-height: 10px;
	}

	/* fill handle */
	.cell-selection::after {
		content: '';
		position: absolute;
		right: -4px;
		bottom: -4px;
		width: 5px;
		height: 5px;
		border: solid #fff;
		border-width: 1px 0 0 1px;
		background: #3685f2;
	}

	.button-widget {
		margin-top: 6px;
	}

	.scroll-y,
	.scroll-x {
		flex: none;
		display: flex;
		gap: 1px;
	}

	.scroll-y {
		flex-direction: column;
		width: 17px;
		padding: 1px 0 0 1px;
	}

	.scroll-x {
		height: 16px;
		padding-left: 1px;
	}

	.scroll-y button,
	.scroll-x button {
		flex: none;
		display: grid;
		place-items: center;
		width: 16px;
		height: 16px;
		background: #fff;
		color: #333;
	}

	.bar {
		background: #e1e1e1;
	}

	.scroll-y .bar {
		flex: 687;
	}

	.scroll-y .rest {
		flex: 25;
	}

	.scroll-x .bar {
		flex: 1150;
	}

	.scroll-x .rest {
		flex: 97;
	}

	footer {
		flex: none;
		display: flex;
		height: 19px;
	}

	.sheet-tab {
		display: flex;
		align-items: center;
		gap: 4px;
		width: 75px;
		margin-right: 12px;
		padding: 0 0 2px 10px;
		background: #fff;
		color: #555;
	}

	.new-sheet {
		margin-right: 8px;
	}

	.zoom {
		display: flex;
		align-items: center;
		margin-left: auto;
	}

	.zoom .arrow.next {
		margin: 0 15px 0 22px;
	}

	.zoom input[type='range'] {
		width: 214px;
		height: 14px;
		margin: 0 12px 0 6px;
		appearance: none;
		background: linear-gradient(#d4d4d8, #d4d4d8) center / 100% 1px no-repeat;
	}

	.zoom input[type='range']::-webkit-slider-thumb {
		appearance: none;
		width: 4px;
		height: 12px;
		border-radius: 1px;
		background: #333;
	}

	.percent {
		width: 35px;
		height: 19px;
		margin: 0 4px 0 6px;
		padding-left: 4px;
		border: 1px solid #d8d9dd;
		background: #fff;
	}

	.zoom span:last-child {
		width: 15px;
	}

	/* right column */
	.strip {
		flex: none;
		display: flex;
		flex-direction: column;
		align-items: center;
		gap: 4px;
		width: 40px;
		padding-top: 13px;
		background: #e8e8e8;
		color: #5d6070;
	}

	.strip .arrow {
		margin-bottom: 4px;
	}

	.strip button {
		display: grid;
		place-items: center;
		width: 32px;
		height: 28px;
	}

	.strip .active {
		background: #f4f4f7;
	}

	.right {
		flex: none;
		width: 299px;
	}

	.title {
		display: flex;
		align-items: center;
		justify-content: space-between;
		height: 27px;
		padding: 0 5px 0 10px;
		border-bottom: 1px solid #d8d8da;
	}

	.select-row {
		display: flex;
		align-items: center;
		height: 43px;
		padding: 0 14px 0 10px;
		border-bottom: 1px solid #d8d8da;
	}

	.select-row .combo {
		width: 183px;
		margin-left: auto;
	}

	.panel-tabs {
		display: grid;
		grid-template-columns: repeat(3, 1fr);
		gap: 1px;
		height: 36px;
	}

	.panel-tabs button {
		background: #d8d9dd;
		line-height: 18px;
	}

	.panel-tabs .active {
		background: #f0f0f2;
	}

	.panel-tabs .long {
		padding: 2px 40px 0 10px;
		text-align: left;
	}

	.attributes {
		display: flex;
		flex-direction: column;
		padding: 9px 11px 0 10px;
	}

	h3 {
		display: flex;
		align-items: center;
		justify-content: space-between;
		height: 24px;
		margin: 1px 0 0;
		padding: 0 6px 0 5px;
		background: #ebebeb;
		font-size: 12px;
		font-weight: normal;
	}

	.field {
		display: flex;
		align-items: center;
		justify-content: space-between;
		height: 20px;
		padding-left: 5px;
	}

	.field.first {
		margin: 10px 0 9px;
	}

	.field .combo {
		width: 161px;
	}

	.check {
		display: grid;
		grid-template-columns: 13px auto;
		align-items: center;
		column-gap: 4px;
		height: 20px;
		margin: 0 0 8px 5px;
	}

	.check input {
		grid-area: 1 / 1;
		width: 13px;
		height: 13px;
		appearance: none;
		background: #fff;
	}

	.check input:checked {
		background: #2f96f3;
	}

	.tick {
		grid-area: 1 / 1;
		fill: none;
		stroke: #fff;
		stroke-width: 2;
		pointer-events: none;
	}

	.field.dict {
		margin: 20px 0 9px;
	}

	.dict label {
		margin-right: auto;
	}

	.dict input {
		width: 117px;
		height: 20px;
		padding: 0 2px 0 3px;
		border: 1px solid #d8d9dd;
		background: #fff;
	}

	.marked {
		position: relative;
	}

	.marked button {
		display: block;
		width: 24px;
		height: 23px;
		border: 3px solid #fd4343;
		background: #c8c9cc;
		color: #555;
		font-weight: bold;
		line-height: 16px;
	}

	.check.last {
		margin-bottom: 105px;
	}

	.check.null {
		margin-top: 9px;
	}

	.badge {
		position: absolute;
		display: grid;
		place-items: center;
		width: 26px;
		height: 26px;
		border-radius: 50%;
		background: #fd4343;
		color: #fff;
		font: 600 18px/26px 'Open Sans', sans-serif;
	}

	.marked .badge {
		right: 0;
		bottom: 22px;
	}

	/* floating window */
	.dialog {
		position: absolute;
		left: 721px;
		top: 235px;
		display: flex;
		flex-direction: column;
		width: 655px;
		height: 598px;
		border: 1px solid #a8a8a8;
		border-radius: 9px;
		background: #f4f4f7;
		box-shadow: 0 24px 44px rgba(0, 0, 0, 0.38);
	}

	.dialog-title {
		display: flex;
		align-items: center;
		justify-content: space-between;
		height: 30px;
		padding: 0 12px 0 3px;
		border-radius: 8px 8px 0 0;
		background: #ebf4f9;
	}

	h2 {
		margin: 0;
		font: 14px/20px 'Open Sans', sans-serif;
	}

	.type-row {
		display: flex;
		align-items: center;
		margin: 3px 3px 10px 4px;
	}

	.type-row label {
		width: 46px;
	}

	.type-row .combo {
		flex: 1;
	}

	.dict-box {
		flex: 1;
		margin: 0 3px 0 4px;
		border: 1px solid #d8d8da;
	}

	.dict-box table {
		width: 100%;
		border-spacing: 0;
		table-layout: fixed;
	}

	.dict-box th,
	.dict-box td {
		height: 20px;
		padding: 0 0 2px 10px;
		font-weight: normal;
		line-height: 16px;
	}

	.dict-box th {
		padding: 0 4px;
	}

	.dict-box th span {
		display: block;
		padding: 1px 0 2px;
		border-bottom: 1px solid #999;
	}

	.dict-box th.end,
	.dict-box td.end {
		width: 19px;
		padding: 0;
	}

	.end .tool {
		margin-left: 5px;
	}

	.dict-box tbody {
		background: #dfdfe1;
	}

	.dict-box .selected td {
		background: #3f99fb;
	}

	.selected td:first-child {
		border-radius: 4px 0 0 4px;
	}

	.selected td:last-child {
		border-radius: 0 4px 4px 0;
	}

	.add-row {
		display: grid;
		place-items: center;
		width: 100%;
		height: 20px;
		margin-top: 2px;
		border: 1px dashed #888;
		background: #fff;
	}

	.dialog-buttons {
		flex: none;
		display: flex;
		align-items: center;
		justify-content: flex-end;
		gap: 10px;
		height: 28px;
		padding-right: 13px;
	}

	.dialog-buttons button {
		height: 20px;
		padding: 0 9px;
		border: 1px solid #d8d9dd;
		background: #fff;
	}

	.outline {
		position: absolute;
		top: 28px;
		left: -1px;
		right: 1px;
		height: 118px;
		border: 3px solid #fd4343;
		pointer-events: none;
	}

	.dialog > .badge {
		top: 1px;
		left: 307px;
	}
</style>
